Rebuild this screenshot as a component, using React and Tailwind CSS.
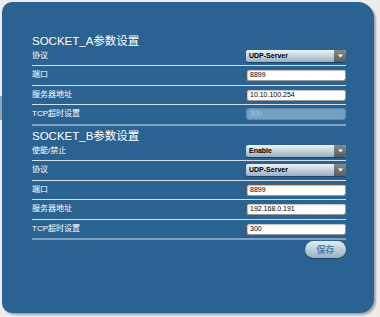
const font = { fontFamily: '"Liberation Sans", "Noto Sans CJK SC", sans-serif' };

function Row({ label, children, last, first }) {
  return (
    <div
      className={`flex items-center justify-between ${first ? 'h-[18px]' : 'h-[18.5px]'} ${
        last ? 'border-b-2 border-[#7fa2c2]' : 'border-b border-[#d3dfea]'
      } box-content`}
    >
      <span className="text-[8px] leading-[10px] text-white">{label}</span>
      {children}
    </div>
  );
}

function TextBox({ value, disabled }) {
  return (
    <div
      className={`w-[100px] h-[12px] rounded-[3px] border flex items-center pl-[3px] text-[7px] leading-[8px] ${
        disabled
          ? 'bg-[#76a0c3] border-[#5e8ab0] text-[#a9c6dd]'
          : 'bg-white border-[#5a5a5a] border-b-[#9a9a9a] border-r-[#9a9a9a] text-black shadow-[inset_1px_1px_1px_rgba(0,0,0,0.25)]'
      }`}
    >
      {value}
    </div>
  );
}

function SelectBox({ value }) {
  return (
    <div className="w-[100px] h-[12px] rounded-[2px] flex overflow-hidden bg-gradient-to-b from-[#eef3f7] via-[#c3d2de] to-[#98afc1] shadow-[0_1px_1px_rgba(0,0,0,0.35)]">
      <div className="flex-1 flex items-center pl-[3px] text-[7px] leading-[8px] font-bold text-black">
        {value}
      </div>
      <div className="w-[12px] h-full flex items-center justify-center bg-gradient-to-b from-[#8a8a8a] to-[#5c5c5c]">
        <svg width="5" height="4" viewBox="0 0 5 4">
          <path d="M0 0.5 L5 0.5 L2.5 3.5 Z" fill="#ffffff" />
        </svg>
      </div>
    </div>
  );
}

function Title({ children, className }) {
  return (
    <div className={`h-[11px] text-[11.5px] leading-[11px] text-white ${className || ''}`}>
      {children}
    </div>
  );
}

export default function App() {
  return (
    <div className="relative w-[380px] h-[317px] bg-[#ededed] overflow-hidden" style={font}>
      <div className="ml-[2px] mt-[2px] w-[372px] h-[311px] bg-[#2a6392] rounded-tl-[10px] rounded-tr-[16px] rounded-bl-[10px] rounded-br-[14px] shadow-[2px_2px_2px_rgba(0,0,0,0.3)] pt-[34px] pl-[30px]">
        <div className="w-[314px]">
          <Title>SOCKET_A参数设置</Title>
          <Row label="协议" first>
            <SelectBox value="UDP-Server" />
          </Row>
          <Row label="端口">
            <TextBox value="8899" />
          </Row>
          <Row label="服务器地址">
            <TextBox value="10.10.100.254" />
          </Row>
          <Row label="TCP超时设置" last>
            <TextBox value="300" disabled />
          </Row>

          <Title className="mt-[5px]">SOCKET_B参数设置</Title>
          <Row label="使能/禁止">
            <SelectBox value="Enable" />
          </Row>
          <Row label="协议">
            <SelectBox value="UDP-Server" />
          </Row>
          <Row label="端口">
            <TextBox value="8899" />
          </Row>
          <Row label="服务器地址">
            <TextBox value="192.168.0.191" />
          </Row>
          <Row label="TCP超时设置" last>
            <TextBox value="300" />
          </Row>

          <div className="flex justify-end mt-[1px]">
            <button className="w-[41px] h-[17px] rounded-full bg-gradient-to-b from-[#e4ecf2] to-[#98b0c3] text-[9px] leading-[10px] font-bold text-[#4f7fac] shadow-[0_1px_1px_rgba(0,0,0,0.3)]">
              保存
            </button>
          </div>
        </div>
      </div>
      <div className="absolute left-0 top-[96px] w-[2px] h-[24px] bg-[#8aa6bf]" />
    </div>
  );
}
